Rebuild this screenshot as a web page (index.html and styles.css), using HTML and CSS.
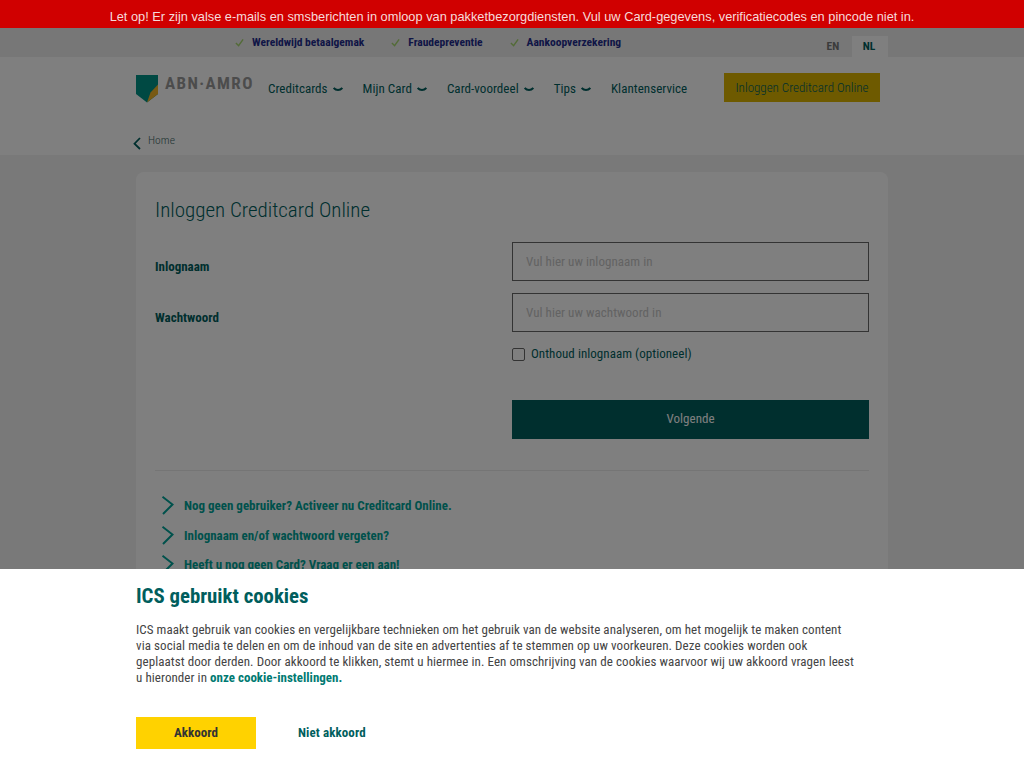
FILE: index.html
```html
<!DOCTYPE html>
<html lang="nl">
<head>
<meta charset="UTF-8" />
<meta name="viewport" content="width=device-width, initial-scale=1" />
<title>Inloggen Creditcard Online</title>
<link rel="stylesheet" href="styles.css">
</head>
<body>
  <div class="alert">Let op! Er zijn valse e-mails en smsberichten in omloop van pakketbezorgdiensten. Vul uw Card-gegevens, verificatiecodes en pincode niet in.</div>

  <div class="page">
    <div class="usp-bar">
      <div class="wrap usp-inner">
        <ul class="usps">
          <li><svg class="tick" viewBox="0 0 10 10"><path d="M1 5.5 4 8.5 9 1.5" /></svg>Wereldwijd betaalgemak</li>
          <li><svg class="tick" viewBox="0 0 10 10"><path d="M1 5.5 4 8.5 9 1.5" /></svg>Fraudepreventie</li>
          <li><svg class="tick" viewBox="0 0 10 10"><path d="M1 5.5 4 8.5 9 1.5" /></svg>Aankoopverzekering</li>
        </ul>
        <div class="langs">
          <a class="lang">EN</a>
          <a class="lang lang-active">NL</a>
        </div>
      </div>
    </div>

    <header class="header">
      <div class="wrap nav-row">
        <a class="logo">
          <svg class="logo-mark" viewBox="0 0 22 28">
            <path fill="#009286" d="M0 0H22V19L11 27.5 0 19Z" />
            <path fill="#f0b428" d="M22 9.5V19L11 27.5 14.5 17.5Z" />
          </svg>
          <span class="logo-text">ABN·AMRO</span>
        </a>
        <nav class="nav">
          <a>Creditcards<svg class="caret" viewBox="0 0 10 5"><path d="M.7 1C3 3.6 7 3.6 9.3 1" /></svg></a>
          <a>Mijn Card<svg class="caret" viewBox="0 0 10 5"><path d="M.7 1C3 3.6 7 3.6 9.3 1" /></svg></a>
          <a>Card-voordeel<svg class="caret" viewBox="0 0 10 5"><path d="M.7 1C3 3.6 7 3.6 9.3 1" /></svg></a>
          <a>Tips<svg class="caret" viewBox="0 0 10 5"><path d="M.7 1C3 3.6 7 3.6 9.3 1" /></svg></a>
          <a>Klantenservice</a>
        </nav>
        <a class="login-btn">Inloggen Creditcard Online</a>
      </div>
      <div class="wrap crumbs">
        <svg class="crumb-arrow" viewBox="0 0 8 13"><path d="M7 1 1.5 6.7 7 12" /></svg>
        <a>Home</a>
      </div>
    </header>

    <main class="wrap main">
      <section class="card">
        <h1 class="title">Inloggen Creditcard Online</h1>
        <form class="form">
          <label class="label" for="user">Inlognaam</label>
          <input class="field" id="user" type="text" placeholder="Vul hier uw inlognaam in">
          <label class="label" for="pass">Wachtwoord</label>
          <input class="field" id="pass" type="text" placeholder="Vul hier uw wachtwoord in">
          <label class="remember"><span class="box"></span>Onthoud inlognaam (optioneel)</label>
          <button class="next" type="button">Volgende</button>
        </form>
        <hr class="line">
        <ul class="links">
          <li><svg class="chev" viewBox="0 0 13 19"><path d="M1.5 .8 11.5 8.5 2 18" /></svg>Nog geen gebruiker? Activeer nu Creditcard Online.</li>
          <li><svg class="chev" viewBox="0 0 13 19"><path d="M1.5 .8 11.5 8.5 2 18" /></svg>Inlognaam en/of wachtwoord vergeten?</li>
          <li><svg class="chev" viewBox="0 0 13 19"><path d="M1.5 .8 11.5 8.5 2 18" /></svg>Heeft u nog geen Card? Vraag er een aan!</li>
        </ul>
      </section>
    </main>

    <div class="backdrop"></div>

    <aside class="cookies">
      <h2 class="cookies-title">ICS gebruikt cookies</h2>
      <p class="cookies-text">ICS maakt gebruik van cookies en vergelijkbare technieken om het gebruik van de website analyseren, om het mogelijk te maken content<br>via social media te delen en om de inhoud van de site en advertenties af te stemmen op uw voorkeuren. Deze cookies worden ook<br>geplaatst door derden. Door akkoord te klikken, stemt u hiermee in. Een omschrijving van de cookies waarvoor wij uw akkoord vragen leest<br>u hieronder in <a class="cookies-link">onze cookie-instellingen.</a></p>
      <div class="cookies-actions">
        <button class="agree" type="button">Akkoord</button>
        <button class="decline" type="button">Niet akkoord</button>
      </div>
    </aside>
  </div>
</body>
</html>
```

FILE: styles.css
```css
* {
  box-sizing: border-box;
}

html,
body {
  height: 100%;
  margin: 0;
  overflow: hidden;
}

body {
  background: #f3f3f3;
  color: #005e5d;
  font-family: "Roboto Condensed", Roboto, sans-serif;
  font-stretch: 75%;
  font-size: 13px;
  letter-spacing: 0.05px;
}

ul {
  list-style: none;
  margin: 0;
  padding: 0;
}

.wrap {
  width: 752px;
  margin: 0 auto;
}

/* Rode waarschuwing */
.alert {
  height: 28px;
  background: #d00000;
  color: #f6dada;
  font-family: "Liberation Sans", Arial, sans-serif;
  font-stretch: normal;
  font-size: 12.8px;
  letter-spacing: 0;
  line-height: 33px;
  text-align: center;
  overflow: hidden;
}

.page {
  position: relative;
  height: 740px;
  overflow: hidden;
}

/* USP balk */
.usp-bar {
  height: 29px;
  background: #eeeeee;
}

.usp-inner {
  display: flex;
  justify-content: space-between;
  height: 100%;
}

.usps {
  display: flex;
  gap: 27px;
  padding: 7px 0 0 99px;
  color: #1f2c8c;
  font-size: 11.5px;
  font-weight: 700;
  letter-spacing: 0;
  line-height: 14px;
}

.usps li {
  display: flex;
  align-items: center;
  height: 14px;
}

.tick {
  width: 9px;
  height: 9px;
  margin-right: 8px;
  fill: none;
  stroke: #a6d66f;
  stroke-width: 1.6;
}

.langs {
  display: flex;
  align-items: flex-end;
}

.lang {
  width: 36px;
  height: 21px;
  padding-right: 2px;
  color: #777;
  font-size: 11.5px;
  font-weight: 700;
  line-height: 20px;
  text-align: center;
}

.lang-active {
  background: #fff;
  color: #005e5d;
}

/* Header */
.header {
  height: 98px;
  background: #fff;
}

.nav-row {
  display: flex;
  align-items: flex-start;
  padding-top: 16px;
}

.logo {
  display: flex;
  width: 132px;
  padding-top: 2px;
}

.logo-mark {
  width: 22px;
  height: 28px;
}

.logo-text {
  margin-left: 7px;
  color: #999;
  font-family: Roboto, sans-serif;
  font-stretch: 87%;
  font-size: 17px;
  font-weight: 700;
  letter-spacing: 1.4px;
  line-height: 17px;
  white-space: nowrap;
}

.nav {
  display: flex;
  gap: 20px;
  padding-top: 7px;
  font-size: 13px;
  line-height: 18px;
}

.nav a {
  display: flex;
  align-items: center;
}

.caret {
  width: 10px;
  height: 5px;
  margin: 1px 0 0 5px;
  fill: none;
  stroke: currentColor;
  stroke-width: 2;
}

.login-btn {
  margin-left: auto;
  margin-right: 8px;
  width: 156px;
  height: 29px;
  background: #dcb400;
  color: #005e5d;
  font-size: 13px;
  font-weight: 300;
  letter-spacing: 0;
  line-height: 29px;
  text-align: center;
}

.crumbs {
  display: flex;
  align-items: flex-start;
  padding-top: 30px;
  color: #3f6665;
  font-size: 11.5px;
  font-weight: 300;
  line-height: 14px;
}

.crumb-arrow {
  width: 8px;
  height: 13px;
  margin: 4px 7px 0 -3px;
  fill: none;
  stroke: #005e5d;
  stroke-width: 1.8;
}

/* Inlogkaart */
.main {
  padding-top: 17px;
}

.card {
  padding: 25px 19px 30px;
  background: #fff;
  border-radius: 8px;
}

.title {
  margin: 0;
  font-size: 21px;
  font-weight: 300;
  letter-spacing: 0;
  line-height: 26px;
}

.form {
  display: grid;
  grid-template-columns: 357px 357px;
  row-gap: 12px;
  margin-top: 19px;
}

.label {
  padding-top: 16px;
  font-size: 13px;
  font-weight: 700;
  letter-spacing: 0;
  line-height: 18px;
}

.field {
  width: 357px;
  height: 39px;
  padding: 0 13px;
  background: #fff;
  border: 1px solid #666;
  border-radius: 0;
  font: inherit;
  font-size: 13px;
  letter-spacing: inherit;
}

.field::placeholder {
  color: #c6c6c6;
  opacity: 1;
}

.remember {
  grid-column: 2;
  display: flex;
  align-items: center;
  margin-top: 1px;
  font-size: 13px;
  line-height: 18px;
}

.box {
  width: 13px;
  height: 13px;
  margin-right: 6px;
  background: #fff;
  border: 1px solid #666;
  border-radius: 2px;
}

.next {
  grid-column: 2;
  height: 39px;
  margin-top: 25px;
  padding: 0 0 2px;
  background: #005e5d;
  border: 0;
  color: #fff;
  font: inherit;
  font-size: 13px;
  letter-spacing: inherit;
}

.line {
  height: 1px;
  margin: 31px 0 0;
  background: #eaeaea;
  border: 0;
}

.links {
  margin-top: 20px;
  padding-left: 6px;
  color: #00a398;
  font-size: 13px;
  font-weight: 700;
  letter-spacing: 0;
  line-height: 29.5px;
}

.links li {
  display: flex;
  align-items: center;
}

.chev {
  width: 13px;
  height: 19px;
  margin-right: 10px;
  fill: none;
  stroke: #00a398;
  stroke-width: 2;
}

/* Overlay en cookiemelding */
.backdrop {
  position: absolute;
  inset: 0;
  background: rgba(0, 0, 0, 0.5);
}

.cookies {
  position: absolute;
  left: 0;
  right: 0;
  bottom: 0;
  height: 199px;
  padding: 14px 136px 0;
  background: #fff;
}

.cookies-title {
  margin: 0;
  font-size: 20.8px;
  font-weight: 700;
  letter-spacing: 0;
  line-height: 26px;
}

.cookies-text {
  margin: 13px 0 0;
  color: #444;
  font-size: 13px;
  letter-spacing: 0.07px;
  line-height: 16px;
  white-space: nowrap;
}

.cookies-link {
  color: #007a72;
  font-weight: 700;
  letter-spacing: 0;
}

.cookies-actions {
  display: flex;
  align-items: center;
  margin-top: 31px;
}

.agree {
  width: 120px;
  height: 32px;
  padding: 0 0 2px;
  background: #ffd200;
  border: 0;
  color: #333;
  font: inherit;
  font-size: 13px;
  font-weight: 700;
  letter-spacing: 0;
}

.decline {
  margin-left: 42px;
  padding: 0 0 2px;
  background: none;
  border: 0;
  color: #005e5d;
  font: inherit;
  font-size: 13px;
  font-weight: 700;
  letter-spacing: 0.1px;
}
```
